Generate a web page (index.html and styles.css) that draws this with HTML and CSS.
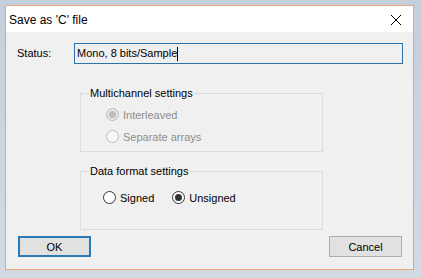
FILE: index.html
```html
<!DOCTYPE html>
<html lang="en">
<head>
    <meta charset="UTF-8">
    <title>Save as 'C' file</title>
    <link rel="stylesheet" href="styles.css">
</head>
<body>
    <div class="window">
        <div class="titlebar">
            <span class="title">Save as 'C' file</span>
            <svg class="close" width="12" height="12" viewBox="0 0 12 12">
                <path d="M1 1 L11 11 M11 1 L1 11" stroke="#000" stroke-width="1" fill="none"/>
            </svg>
        </div>
        <div class="client">
            <div class="status-row">
                <label class="status-label" for="status">Status:</label>
                <div class="status-input" id="status">Mono, 8 bits/Sample<span class="caret"></span></div>
            </div>

            <fieldset class="group disabled">
                <legend>Multichannel settings</legend>
                <div class="radio-list">
                    <div class="radio"><span class="dot checked"></span>Interleaved</div>
                    <div class="radio"><span class="dot"></span>Separate arrays</div>
                </div>
            </fieldset>

            <fieldset class="group format">
                <legend>Data format settings</legend>
                <div class="radio-row">
                    <div class="radio"><span class="dot"></span>Signed</div>
                    <div class="radio"><span class="dot checked"></span>Unsigned</div>
                </div>
            </fieldset>

            <div class="buttons">
                <button class="btn default">OK</button>
                <button class="btn">Cancel</button>
            </div>
        </div>
    </div>
</body>
</html>
```

FILE: styles.css
```css
body {
    margin: 0;
    height: 278px;
    background: linear-gradient(#c5cedb, #d3dae4);
    font-family: "Liberation Sans", Arial, sans-serif;
    font-size: 11px;
    color: #000;
    overflow: hidden;
}

.window {
    margin: 5px 0 0 5px;
    width: 407px;
    height: 263px;
    border: 1px solid #e9a577;
    background-color: #f0f0f0;
    display: flex;
    flex-direction: column;
}

.titlebar {
    height: 26px;
    flex-shrink: 0;
    background-color: #ffffff;
    display: flex;
    align-items: center;
    justify-content: space-between;
    padding: 0 11px 0 3px;
}

.title {
    font-size: 12px;
    padding-top: 1px;
}

.close {
    display: block;
    margin-top: 2px;
}

.client {
    flex: 1;
    padding: 11px 10px 0 11px;
    display: flex;
    flex-direction: column;
}

.status-row {
    display: flex;
    align-items: center;
}

.status-label {
    width: 57px;
    margin-top: -2px;
}

.status-input {
    flex: 1;
    height: 19px;
    line-height: 19px;
    border: 1px solid #2b73a8;
    background-color: #f0f0f0;
    padding-left: 2px;
    display: flex;
    align-items: center;
}

.caret {
    display: inline-block;
    width: 1px;
    height: 14px;
    background-color: #000;
}

.group {
    box-sizing: border-box;
    margin: 23px 0 0 63px;
    width: 243px;
    height: 65px;
    padding: 0;
    border: 1px solid #dcdcdc;
    min-width: 0;
    flex-shrink: 0;
}

.group legend {
    margin-left: 8px;
    padding: 0 1px;
    line-height: 13px;
}

.group.format {
    margin-top: 13px;
}

.radio-list {
    display: flex;
    flex-direction: column;
    gap: 9px;
    padding: 8px 0 0 25px;
}

.radio-row {
    display: flex;
    gap: 18px;
    padding: 13px 0 0 22px;
}

.radio {
    display: flex;
    align-items: center;
    height: 13px;
}

.dot {
    width: 11px;
    height: 11px;
    border: 1px solid #333333;
    border-radius: 50%;
    background-color: #ffffff;
    margin-right: 4px;
    display: flex;
    align-items: center;
    justify-content: center;
}

.dot.checked::after {
    content: "";
    width: 7px;
    height: 7px;
    border-radius: 50%;
    background-color: #333333;
}

.disabled .radio {
    color: #8d8d8d;
}

.disabled .dot {
    border-color: #bcbcbc;
    background-color: #f7f7f7;
}

.disabled .dot.checked {
    background-color: #e6e6e6;
}

.disabled .dot.checked::after {
    background-color: #bcbcbc;
}

.buttons {
    display: flex;
    justify-content: space-between;
    margin-top: 6px;
    padding-left: 1px;
    padding-right: 1px;
}

.btn {
    width: 73px;
    height: 21px;
    font-family: "Liberation Sans", Arial, sans-serif;
    font-size: 11px;
    color: #000;
    background-color: #e1e1e1;
    border: 1px solid #adadad;
    padding: 0;
}

.btn.default {
    border: 2px solid #2a7ab8;
}
```
